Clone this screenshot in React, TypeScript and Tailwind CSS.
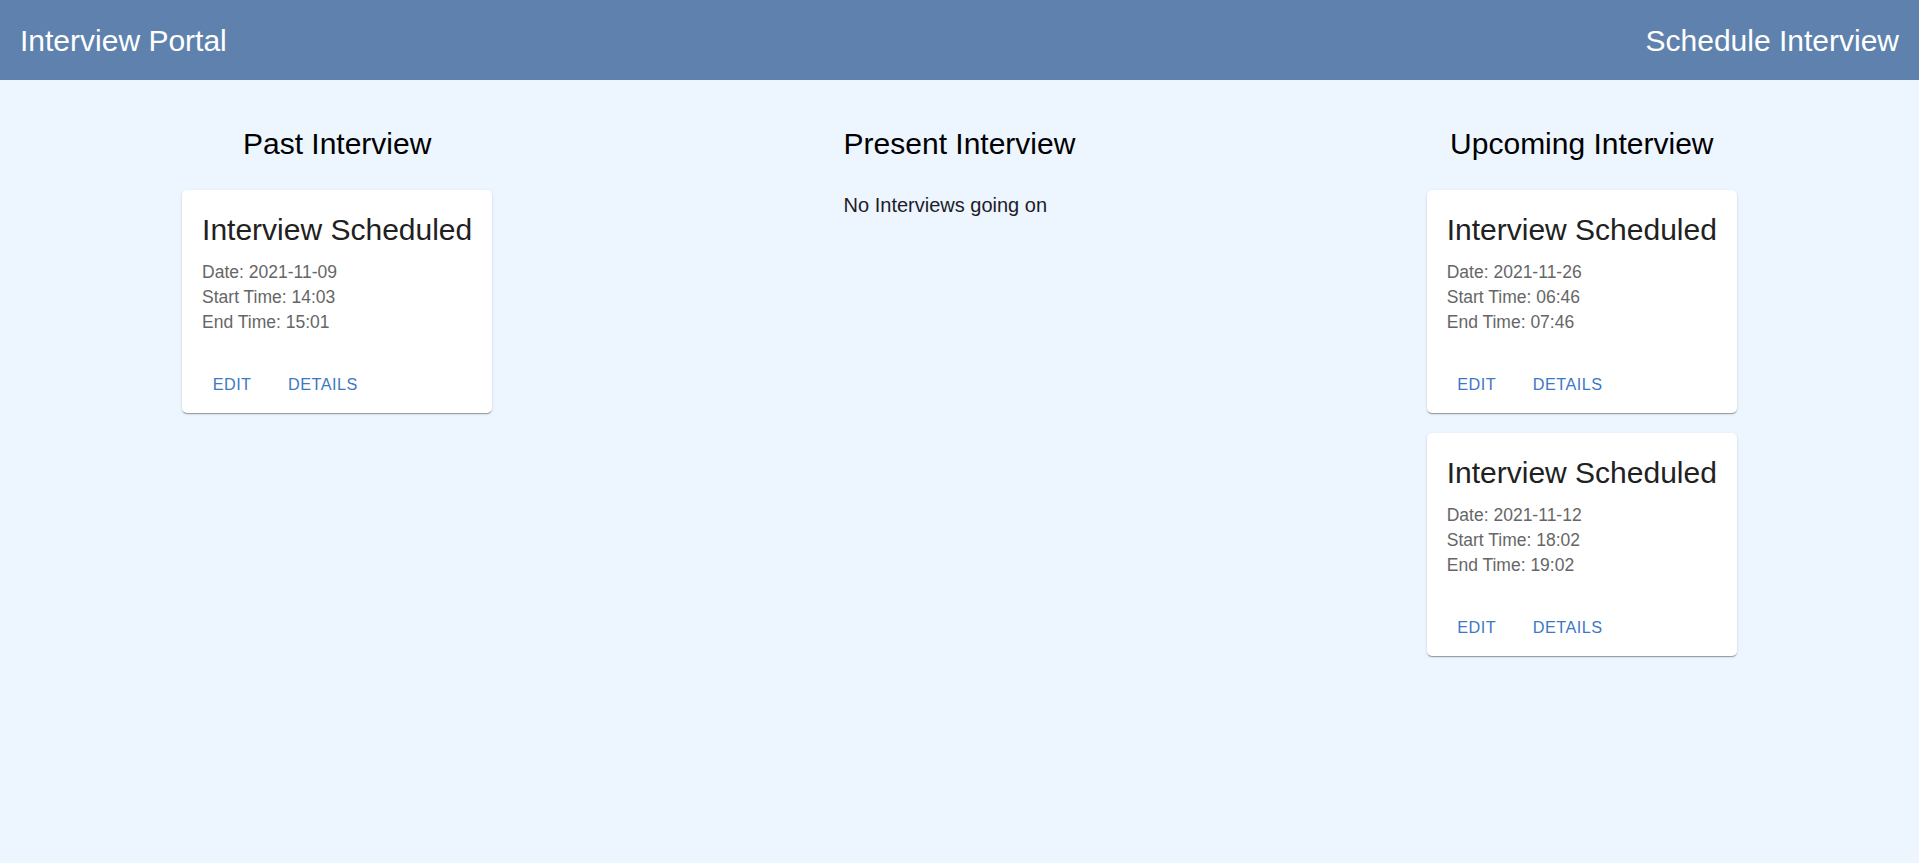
import React from 'react'

type Interview = { date: string; start: string; end: string }

const past: Interview[] = [{ date: '2021-11-09', start: '14:03', end: '15:01' }]
const upcoming: Interview[] = [
  { date: '2021-11-26', start: '06:46', end: '07:46' },
  { date: '2021-11-12', start: '18:02', end: '19:02' },
]

function InterviewCard({ item }: { item: Interview }) {
  return (
    <div className="bg-white rounded-[5px] shadow-[0_2px_1px_-1px_rgba(0,0,0,0.2),0_1px_1px_0_rgba(0,0,0,0.14),0_1px_3px_0_rgba(0,0,0,0.12)]">
      <div className="px-5 pt-5 pb-5">
        <h5 className="text-[30px] leading-[40px] text-[#212121] mb-[10px]">Interview Scheduled</h5>
        <div className="text-[17.5px] leading-[25px] text-[#666666]">
          <p>Date: {item.date}</p>
          <p>Start Time: {item.start}</p>
          <p>End Time: {item.end}</p>
        </div>
      </div>
      <div className="flex items-center p-[10px] gap-[10px]">
        <button className="min-w-[80px] h-[38px] px-[6px] text-[16.25px] uppercase tracking-[0.46px] text-[#3d78c3]">
          Edit
        </button>
        <button className="min-w-[80px] h-[38px] px-[6px] text-[16.25px] uppercase tracking-[0.46px] text-[#3d78c3]">
          Details
        </button>
      </div>
    </div>
  )
}

function App() {
  return (
    <div className="min-h-[863px] bg-[#edf5fe] font-['Liberation_Sans',Arial,sans-serif]">
      <header className="h-20 bg-[#5e82ad] flex items-center justify-between px-5 text-white text-[30px]">
        <span>Interview Portal</span>
        <span>Schedule Interview</span>
      </header>
      <main className="grid grid-cols-3 px-[26px] pt-[46px]">
        <section className="flex flex-col items-center">
          <h2 className="text-[30px] leading-[36px] text-black mb-7">Past Interview</h2>
          <div className="flex flex-col gap-5">
            {past.map((p, i) => (
              <InterviewCard key={i} item={p} />
            ))}
          </div>
        </section>
        <section className="flex flex-col items-center">
          <div>
            <h2 className="text-[30px] leading-[36px] text-black mb-7">Present Interview</h2>
            <p className="text-[20px] leading-[30px] text-[#1c1c28]">No Interviews going on</p>
          </div>
        </section>
        <section className="flex flex-col items-center">
          <h2 className="text-[30px] leading-[36px] text-black mb-7">Upcoming Interview</h2>
          <div className="flex flex-col gap-5">
            {upcoming.map((p, i) => (
              <InterviewCard key={i} item={p} />
            ))}
          </div>
        </section>
      </main>
    </div>
  )
}

export default App
